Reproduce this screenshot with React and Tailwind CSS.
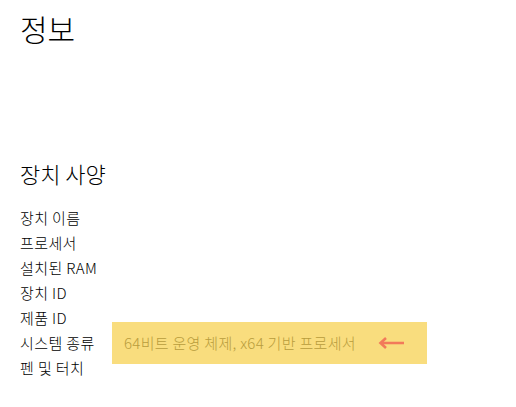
import React from "react";

const specs = ["장치 이름", "프로세서", "설치된 RAM", "장치 ID", "제품 ID", "시스템 종류", "펜 및 터치"];

export default function App() {
  return (
    <div
      className="w-[516px] h-[407px] bg-white text-black overflow-hidden"
      style={{ fontFamily: '"Noto Sans CJK KR", "Noto Sans", sans-serif' }}
    >
      <div className="pl-5 pt-[8px]">
        <h1 className="text-[30px] leading-[40px] font-light">정보</h1>
        <h2 className="mt-[110px] text-[22px] leading-[30px] font-light">장치 사양</h2>
        <div className="relative mt-[17px]">
          <ul className="text-[15px] leading-[25px] tracking-[0.4px] font-light">
            {specs.map((s) => (
              <li key={s}>{s}</li>
            ))}
          </ul>
          <div className="absolute left-[92px] top-[117px] w-[315px] h-[42px] bg-[#f9dd7e] flex items-center pl-3 pr-[23px]">
            <span className="text-[15px] tracking-[0.3px] font-light text-[#b89c3c]">64비트 운영 체제, x64 기반 프로세서</span>
            <svg className="ml-auto" width="26" height="12" viewBox="0 0 26 12">
              <path d="M26 6H3M8 1L2.5 6L8 11" stroke="#f27a5a" strokeWidth="2.6" fill="none" />
            </svg>
          </div>
        </div>
      </div>
    </div>
  );
}
